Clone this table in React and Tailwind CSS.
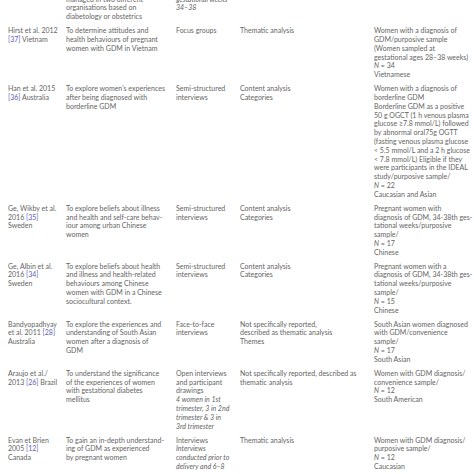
import React from 'react';

const Ref = ({ n }) => <span className="text-[#5a5db8]">[{n}]</span>;
const N = ({ v }) => (
  <>
    <i>N</i> = {v}
  </>
);

const rows = [
  {
    c1: [],
    c2: ['managed in two different', 'organisations based on', 'diabetology or obstetrics'],
    c3: [<i key="a">gestational weeks</i>, <i key="b">34–38</i>],
    c4: [],
    c5: [],
  },
  {
    c1: ['Hirst et al. 2012', <><Ref n={37} /> Vietnam</>],
    c2: ['To determine attitudes and', 'health behaviours of pregnant', 'women with GDM in Vietnam'],
    c3: ['Focus groups'],
    c4: ['Thematic analysis'],
    c5: [
      'Women with a diagnosis of',
      'GDM/purposive sample',
      '(Women sampled at',
      'gestational ages 28–38 weeks)',
      <N v={34} />,
      'Vietnamese',
    ],
  },
  {
    c1: ['Han et al. 2015', <><Ref n={36} /> Australia</>],
    c2: ["To explore women's experiences", 'after being diagnosed with', 'borderline GDM'],
    c3: ['Semi-structured', 'interviews'],
    c4: ['Content analysis', 'Categories'],
    c5: [
      'Women with a diagnosis of',
      'borderline GDM',
      'Borderline GDM as a positive',
      '50 g OGCT (1 h venous plasma',
      'glucose ≥7.8 mmol/L) followed',
      'by abnormal oral75g OGTT',
      '(fasting venous plasma glucose',
      '< 5.5 mmol/L and a 2 h glucose',
      '< 7.8 mmol/L) Eligible if they',
      'were participants in the IDEAL',
      'study/purposive sample/',
      <N v={22} />,
      'Caucasian and Asian',
    ],
  },
  {
    c1: ['Ge, Wikby et al.', <>2016 <Ref n={35} /></>, 'Sweden'],
    c2: ['To explore beliefs about illness', 'and health and self-care behav-', 'iour among urban Chinese', 'women'],
    c3: ['Semi-structured', 'interviews'],
    c4: ['Content analysis', 'Categories'],
    c5: ['Pregnant women with', 'diagnosis of GDM, 34-38th ges-', 'tational weeks/purposive', 'sample/', <N v={17} />, 'Chinese'],
  },
  {
    c1: ['Ge, Albin et al.', <>2016 <Ref n={34} /></>, 'Sweden'],
    c2: [
      'To explore beliefs about health',
      'and illness and health-related',
      'behaviours among Chinese',
      'women with GDM in a Chinese',
      'sociocultural context.',
    ],
    c3: ['Semi-structured', 'interviews'],
    c4: ['Content analysis', 'Categories'],
    c5: ['Pregnant women with a', 'diagnosis of GDM, 34-38th ges-', 'tational weeks/purposive', 'sample/', <N v={15} />, 'Chinese'],
  },
  {
    c1: ['Bandyopadhyay', <>et al. 2011 <Ref n={28} /></>, 'Australia'],
    c2: ['To explore the experiences and', 'understanding of South Asian', 'women after a diagnosis of', 'GDM'],
    c3: ['Face-to-face', 'interviews'],
    c4: ['Not specifically reported,', 'described as thematic analysis', 'Themes'],
    c5: ['South Asian women diagnosed', 'with GDM/convenience', 'sample/', <N v={17} />, 'South Asian'],
  },
  {
    c1: ['Araujo et al./', <>2013 <Ref n={26} /> Brazil</>],
    c2: ['To understand the significance', 'of the experiences of women', 'with gestational diabetes', 'mellitus'],
    c3: [
      'Open interviews',
      'and participant',
      'drawings',
      <i>4 women in 1st</i>,
      <i>trimester, 3 in 2nd</i>,
      <i>trimester &amp; 3 in</i>,
      <i>3rd trimester</i>,
    ],
    c4: ['Not specifically reported, described as', 'thematic analysis'],
    c5: ['Women with GDM diagnosis/', 'convenience sample/', <N v={12} />, 'South American'],
  },
  {
    c1: ['Evan et Brien', <>2005 <Ref n={12} /></>, 'Canada'],
    c2: ['To gain an in-depth understand-', 'ing of GDM as experienced', 'by pregnant women'],
    c3: ['Interviews', <i>Interviews</i>, <i>conducted prior to</i>, <i>delivery and 6–8</i>],
    c4: ['Thematic analysis'],
    c5: ['Women with GDM diagnosis/', 'purposive sample/', <N v={12} />, 'Caucasian'],
  },
];

const Cell = ({ lines }) => (
  <div className="min-w-0">
    {lines.map((l, i) => (
      <div key={i} className="whitespace-nowrap h-[8.8px]">
        {l}
      </div>
    ))}
  </div>
);

export default function App() {
  return (
    <div className="w-[474px] h-[474px] overflow-hidden bg-white text-[#646464] font-['Lato','Open_Sans',sans-serif] text-[7px] leading-[8.8px]">
      <div className="mt-[-5.4px] pl-[8px]">
        {rows.map((r, i) => (
          <div key={i} className="grid grid-cols-[58px_110px_64px_134px_1fr] pb-[5.2px]">
            <Cell lines={r.c1} />
            <Cell lines={r.c2} />
            <Cell lines={r.c3} />
            <Cell lines={r.c4} />
            <Cell lines={r.c5} />
          </div>
        ))}
      </div>
    </div>
  );
}
